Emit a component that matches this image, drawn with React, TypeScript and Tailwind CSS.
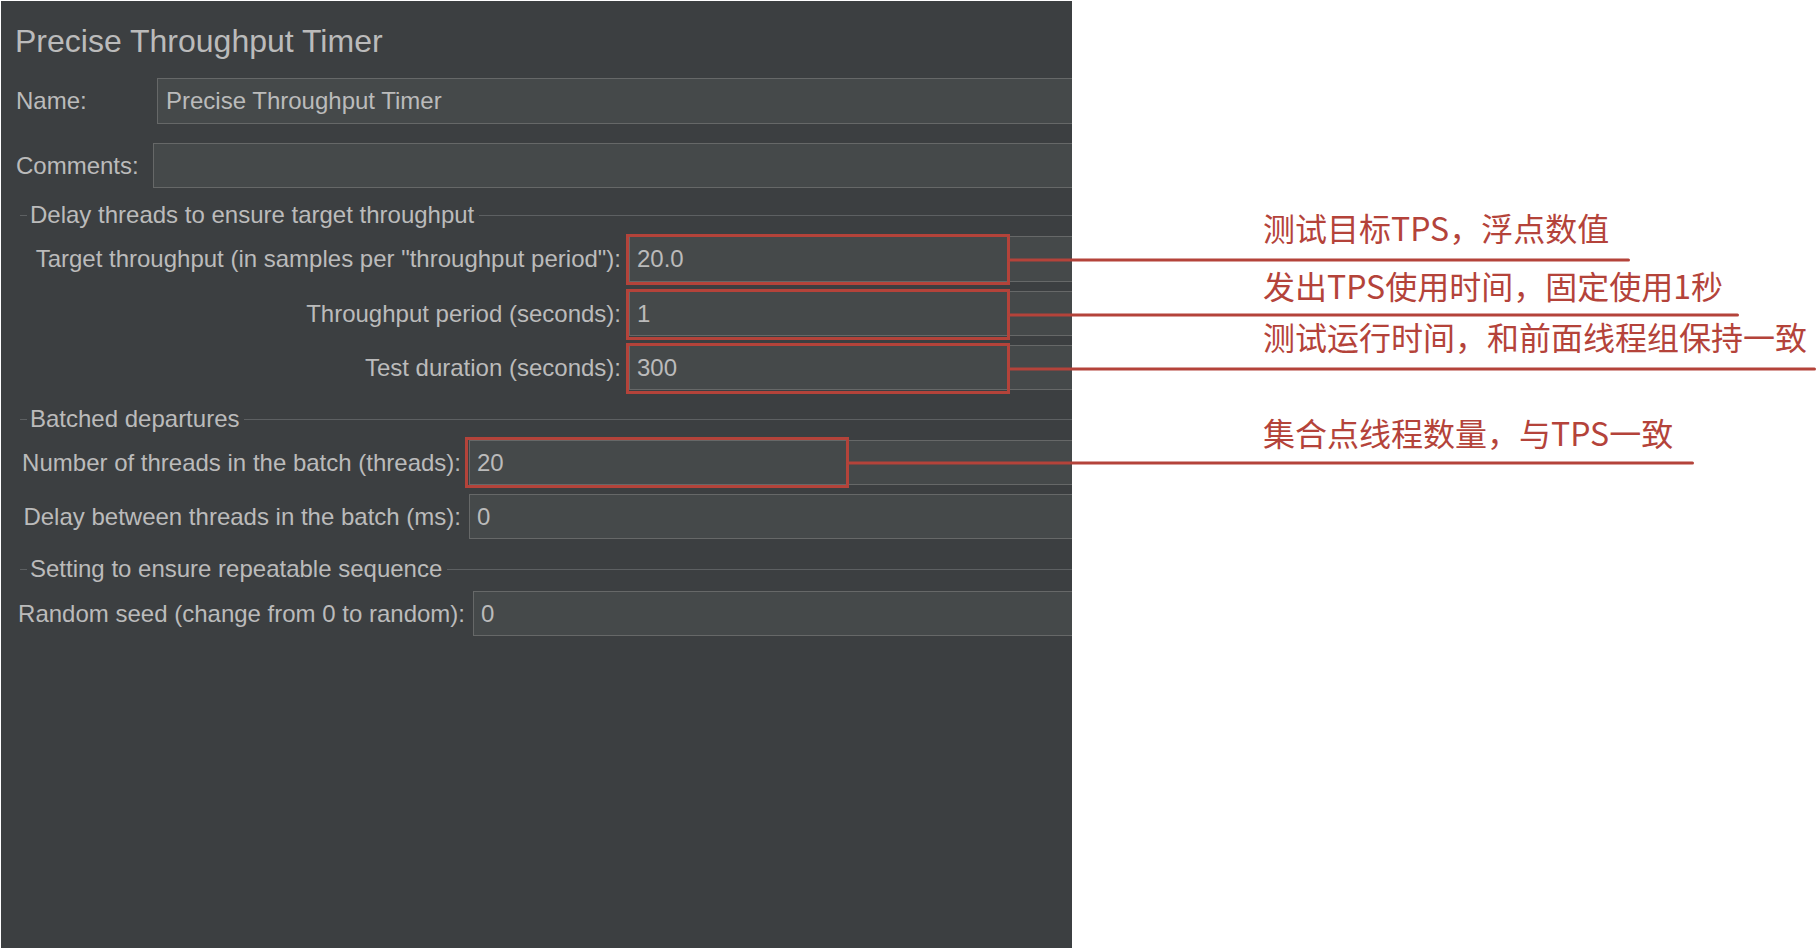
type FieldProps = {
  label: string;
  value: string;
  labelWidth: string;
  mt: string;
  height?: string;
  box?: string;
  line?: string;
};

const RED = "bg-[#b4433a]";

function SectionHeader({ title, mt }: { title: string; mt: string }) {
  return (
    <div className={`${mt} flex h-[26px] items-center`}>
      <div className="ml-[19px] h-px w-[7px] bg-[#5d6062]" />
      <span className="ml-[3px] whitespace-nowrap text-[24px] leading-none">{title}</span>
      <div className="ml-[5px] h-px flex-1 bg-[#5d6062]" />
    </div>
  );
}

function FieldRow({ label, value, labelWidth, mt, height = "h-[45px]", box, line }: FieldProps) {
  return (
    <div className={`${mt} flex ${height}`}>
      <div className={`${labelWidth} flex shrink-0 items-center justify-end whitespace-nowrap pr-[8px] text-[24px] leading-none`}>
        {label}
      </div>
      <div className="relative flex flex-1 items-center border border-r-0 border-[#666868] bg-[#45494a] pl-[7px] text-[24px] leading-none">
        {value}
        {box && (
          <div className={`pointer-events-none absolute ${box} h-[51px] w-[384px] border-[3px] border-[#b4433a]`}>
            <div className={`absolute left-full top-1/2 h-[3px] -translate-y-1/2 rounded-full ${RED} ${line}`} />
          </div>
        )}
      </div>
    </div>
  );
}

function TimerPanel() {
  return (
    <section className="mt-[1px] ml-[1px] h-[947px] w-[1071px] shrink-0 bg-[#3c3f41] font-['Liberation_Sans',Arial,sans-serif] text-[#bbbbbb]">
      <div className="mt-[12px] flex h-[56px] items-center pl-[14px] text-[32px] leading-none">Precise Throughput Timer</div>

      <div className="mt-[9px] flex h-[46px]">
        <div className="flex w-[156px] shrink-0 items-center pl-[15px] text-[24px] leading-none">Name:</div>
        <div className="flex flex-1 items-center border border-r-0 border-[#666868] bg-[#45494a] pl-[8px] text-[24px] leading-none">
          Precise Throughput Timer
        </div>
      </div>

      <div className="mt-[19px] flex h-[45px]">
        <div className="flex w-[152px] shrink-0 items-center pl-[15px] text-[24px] leading-none">Comments:</div>
        <div className="flex-1 border border-r-0 border-[#666868] bg-[#45494a]" />
      </div>

      <SectionHeader title="Delay threads to ensure target throughput" mt="mt-[14px]" />
      <FieldRow
        label={'Target throughput (in samples per "throughput period"):'}
        value="20.0"
        labelWidth="w-[628px]"
        mt="mt-[8px]"
        height="h-[46px]"
        box="left-[-4px] top-[-3px]"
        line="w-[623px]"
      />
      <FieldRow
        label="Throughput period (seconds):"
        value="1"
        labelWidth="w-[628px]"
        mt="mt-[9px]"
        box="left-[-4px] top-[-3px]"
        line="w-[732px]"
      />
      <FieldRow
        label="Test duration (seconds):"
        value="300"
        labelWidth="w-[628px]"
        mt="mt-[9px]"
        box="left-[-4px] top-[-3px]"
        line="w-[809px]"
      />

      <SectionHeader title="Batched departures" mt="mt-[16px]" />
      <FieldRow
        label="Number of threads in the batch (threads):"
        value="20"
        labelWidth="w-[468px]"
        mt="mt-[8px]"
        box="left-[-5px] top-[-4px]"
        line="w-[848px]"
      />
      <FieldRow label="Delay between threads in the batch (ms):" value="0" labelWidth="w-[468px]" mt="mt-[9px]" />

      <SectionHeader title="Setting to ensure repeatable sequence" mt="mt-[17px]" />
      <FieldRow label="Random seed (change from 0 to random):" value="0" labelWidth="w-[472px]" mt="mt-[9px]" />
    </section>
  );
}

function Notes() {
  return (
    <div className="flex flex-1 flex-col pl-[191px] font-['Noto_Sans_CJK_SC',sans-serif] text-[32px] leading-[40px] text-[#b4433a]">
      <div className="mt-[207px] whitespace-nowrap">测试目标TPS，浮点数值</div>
      <div className="mt-[18px] whitespace-nowrap">发出TPS使用时间，固定使用1秒</div>
      <div className="mt-[11px] whitespace-nowrap">测试运行时间，和前面线程组保持一致</div>
      <div className="mt-[56px] whitespace-nowrap">集合点线程数量，与TPS一致</div>
    </div>
  );
}

export default function App() {
  return (
    <div className="flex h-[950px] w-[1818px] overflow-hidden bg-white">
      <TimerPanel />
      <Notes />
    </div>
  );
}
